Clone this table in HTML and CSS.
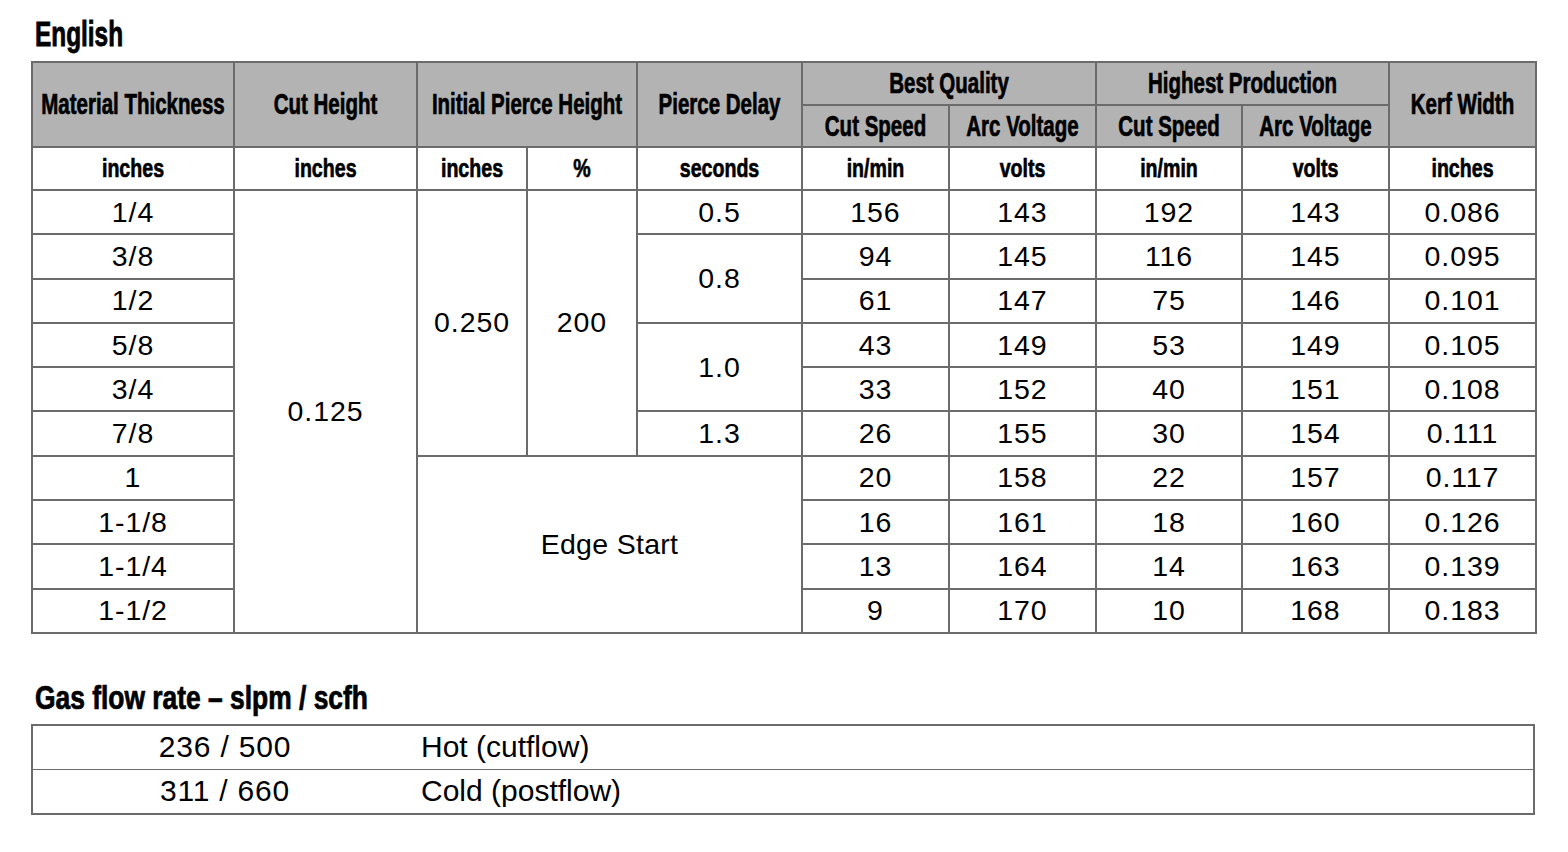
FILE: index.html
```html
<!DOCTYPE html>
<html>
<head>
<meta charset="utf-8">
<link rel="stylesheet" href="styles.css">
</head>
<body>
<div class="page">
  <h1 class="title"><span class="cond">English</span></h1>
  <table class="cut">
    <colgroup>
      <col class="c202"><col class="c183"><col class="c110"><col class="c110"><col class="c165">
      <col class="c147"><col class="c147"><col class="c146"><col class="c147"><col class="c147">
    </colgroup>
    <thead>
      <tr class="h1">
        <th rowspan="2"><span class="cond">Material Thickness</span></th>
        <th rowspan="2"><span class="cond">Cut Height</span></th>
        <th rowspan="2" colspan="2"><span class="cond">Initial Pierce Height</span></th>
        <th rowspan="2"><span class="cond">Pierce Delay</span></th>
        <th colspan="2"><span class="cond">Best Quality</span></th>
        <th colspan="2"><span class="cond">Highest Production</span></th>
        <th rowspan="2"><span class="cond">Kerf Width</span></th>
      </tr>
      <tr class="h2">
        <th><span class="cond">Cut Speed</span></th>
        <th><span class="cond">Arc Voltage</span></th>
        <th><span class="cond">Cut Speed</span></th>
        <th><span class="cond">Arc Voltage</span></th>
      </tr>
      <tr class="units">
        <th><span class="cond">inches</span></th>
        <th><span class="cond">inches</span></th>
        <th><span class="cond">inches</span></th>
        <th><span class="cond">%</span></th>
        <th><span class="cond">seconds</span></th>
        <th><span class="cond">in/min</span></th>
        <th><span class="cond">volts</span></th>
        <th><span class="cond">in/min</span></th>
        <th><span class="cond">volts</span></th>
        <th><span class="cond">inches</span></th>
      </tr>
    </thead>
    <tbody>
      <tr><td>1/4</td><td rowspan="10">0.125</td><td rowspan="6">0.250</td><td rowspan="6">200</td><td>0.5</td><td>156</td><td>143</td><td>192</td><td>143</td><td>0.086</td></tr>
      <tr><td>3/8</td><td rowspan="2">0.8</td><td>94</td><td>145</td><td>116</td><td>145</td><td>0.095</td></tr>
      <tr><td>1/2</td><td>61</td><td>147</td><td>75</td><td>146</td><td>0.101</td></tr>
      <tr><td>5/8</td><td rowspan="2">1.0</td><td>43</td><td>149</td><td>53</td><td>149</td><td>0.105</td></tr>
      <tr><td>3/4</td><td>33</td><td>152</td><td>40</td><td>151</td><td>0.108</td></tr>
      <tr><td>7/8</td><td>1.3</td><td>26</td><td>155</td><td>30</td><td>154</td><td>0.111</td></tr>
      <tr><td>1</td><td rowspan="4" colspan="3" class="edge">Edge Start</td><td>20</td><td>158</td><td>22</td><td>157</td><td>0.117</td></tr>
      <tr><td>1-1/8</td><td>16</td><td>161</td><td>18</td><td>160</td><td>0.126</td></tr>
      <tr><td>1-1/4</td><td>13</td><td>164</td><td>14</td><td>163</td><td>0.139</td></tr>
      <tr><td>1-1/2</td><td>9</td><td>170</td><td>10</td><td>168</td><td>0.183</td></tr>
    </tbody>
  </table>

  <h2 class="title2"><span class="cond">Gas flow rate – slpm / scfh</span></h2>
  <table class="gas">
    <colgroup><col class="g1"><col class="g2"></colgroup>
    <tbody>
      <tr><td class="gv">236 / 500</td><td class="gl">Hot (cutflow)</td></tr>
      <tr><td class="gv">311 / 660</td><td class="gl">Cold (postflow)</td></tr>
    </tbody>
  </table>
</div>
</body>
</html>
```

FILE: styles.css
```css
html, body {
  margin: 0;
  padding: 0;
  background: #ffffff;
}
body {
  font-family: "Liberation Sans", Arial, sans-serif;
  color: #000;
}
.page {
  padding: 0 0 0 31px;
}
.cond {
  display: inline-block;
  font-family: "Liberation Sans", Arial, sans-serif;
  font-weight: bold;
  line-height: 1;
  white-space: nowrap;
  transform: scaleY(1.43);
  -webkit-text-stroke: 0.5px #000;
}
.title {
  margin: 0;
  height: 61px;
  box-sizing: border-box;
  padding: 26px 0 0 4px;
  font-size: 24.4px;
  line-height: 1;
  font-weight: bold;
}
.title .cond {
  transform-origin: 0 0.8465em;
  transform: scaleY(1.43);
  -webkit-text-stroke: 0.6px #000;
}
.cut {
  border-collapse: collapse;
  table-layout: fixed;
  width: 1504px;
}
.c202 { width: 202px; }
.c183 { width: 183px; }
.c110 { width: 110px; }
.c165 { width: 165px; }
.c147 { width: 147px; }
.c146 { width: 146px; }

.cut th, .cut td {
  border: 2px solid #6b6b6b;
  padding: 0;
  text-align: center;
  vertical-align: middle;
}
.cut th {
  font-size: 20.5px;
  font-weight: bold;
  line-height: 1;
}
.cut thead .h1 th, .cut thead .h2 th {
  background: #b3b3b3;
}
.cut .h1 { height: 43px; }
.cut .h2 { height: 42px; }
.cut .units { height: 43px; }
.cut .units th {
  background: #fff;
  font-size: 19.6px;
  border-bottom: 1px solid #000;
}
.cut .units .cond {
  transform: scaleY(1.33);
}
.cut td {
  font-size: 28.5px;
  letter-spacing: 0.9px;
  height: 44.3px;
  box-sizing: border-box;
}
.cut td.edge {
  letter-spacing: 0.3px;
}
.cut tbody tr { height: 44.3px; }

.title2 {
  margin: 0;
  height: 90px;
  box-sizing: border-box;
  padding: 53px 0 0 4px;
  font-size: 26.4px;
  line-height: 1;
  font-weight: bold;
}
.title2 .cond {
  transform-origin: 0 0.8465em;
  transform: scaleY(1.24);
  -webkit-text-stroke: 0.6px #000;
}
.gas {
  border-collapse: collapse;
  table-layout: fixed;
  width: 1504px;
  border: 2px solid #6b6b6b;
}
.g1 { width: 385px; }
.gas tr { height: 44px; }
.gas td {
  font-size: 30px;
  line-height: 1;
  height: 43px;
  padding: 0;
  vertical-align: middle;
  border-bottom: 1px solid #6b6b6b;
}
.gas .gv { text-align: center; letter-spacing: 0.8px; }
.gas .gl { text-align: left; padding-left: 4px; }
```
